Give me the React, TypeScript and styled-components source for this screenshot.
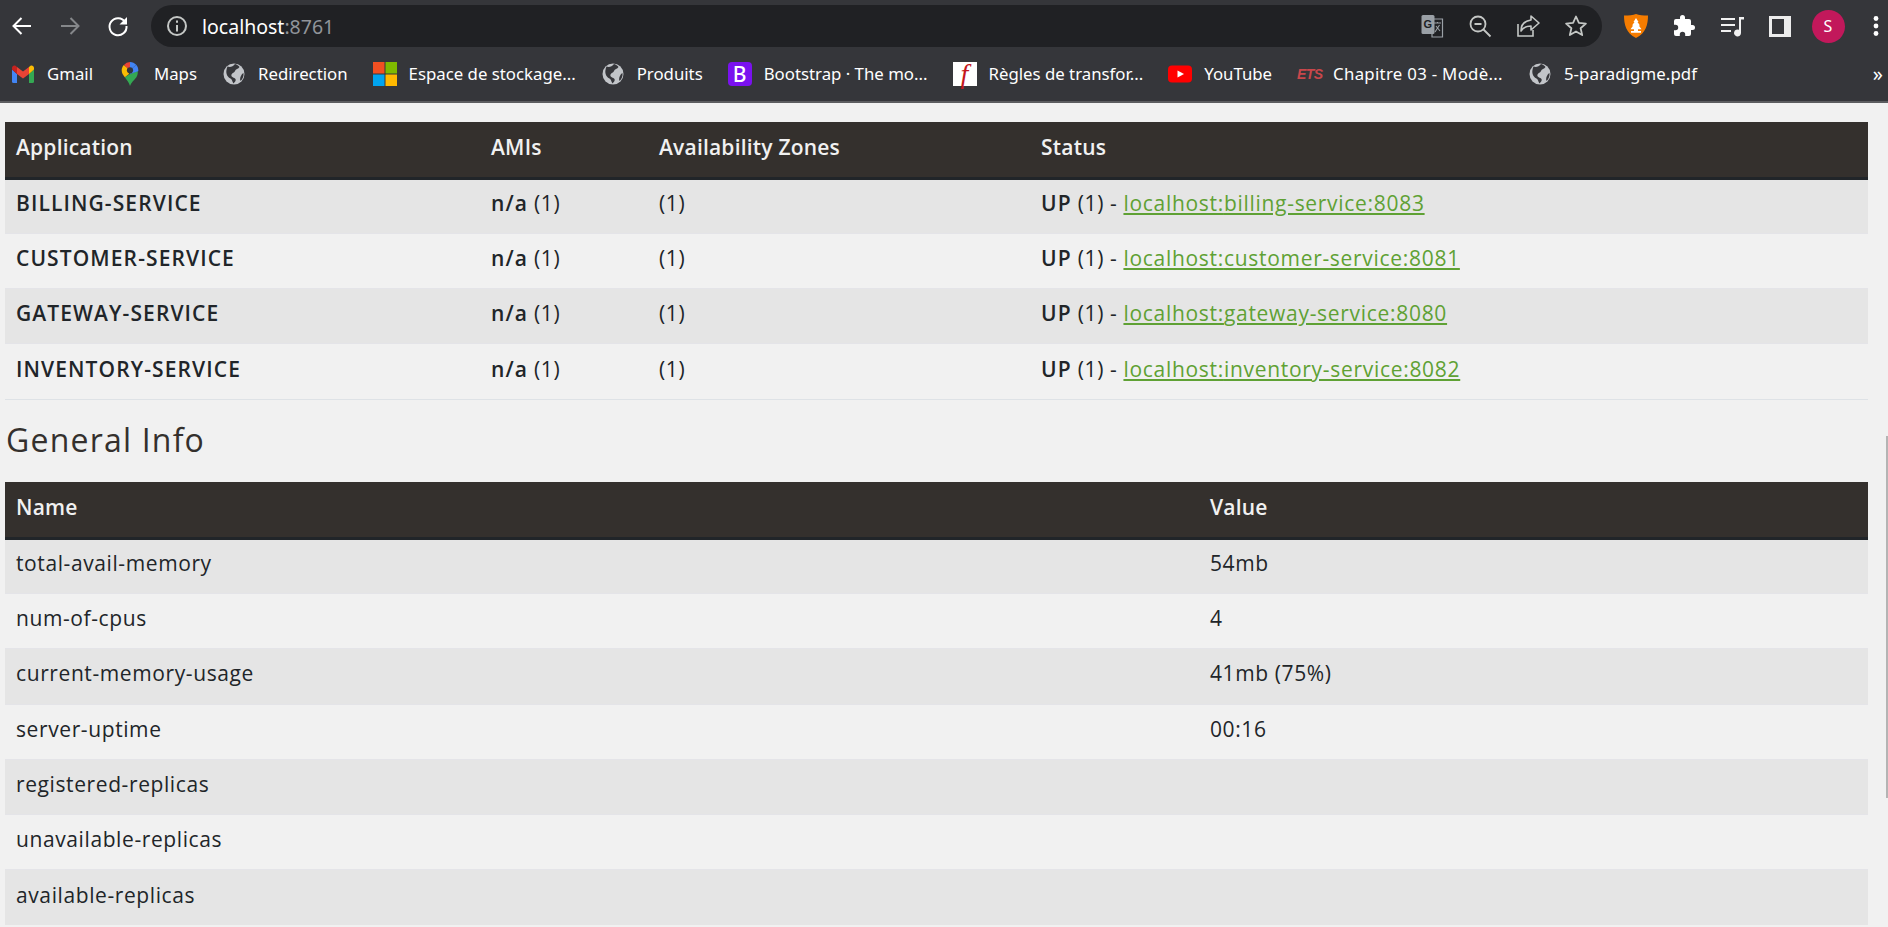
import React from "react";
import styled, { createGlobalStyle } from "styled-components";

const Global = createGlobalStyle`
  html, body { margin: 0; padding: 0; height: 100%; overflow: hidden; background: #f1f1f1; }
  #root { height: 100%; }
`;

const Page = styled.div`
  width: 1888px;
  height: 927px;
  overflow: hidden;
  position: relative;
  display: flex;
  flex-direction: column;
  font-family: "Open Sans", "Liberation Sans", sans-serif;
`;

const Chrome = styled.header`
  flex: none;
  height: 101px;
  background: #35363a;
  border-bottom: 2px solid #5c5d60;
  font-family: "Noto Sans", "Liberation Sans", sans-serif;
`;

const Toolbar = styled.div`
  height: 52px;
  display: flex;
  align-items: center;
`;

const NavGroup = styled.div`
  display: flex;
  margin-left: -2px;
  margin-right: 9px;
`;

const IconBtn = styled.div`
  width: 48px;
  height: 42px;
  flex: none;
  display: flex;
  align-items: center;
  justify-content: center;
`;

const Omnibox = styled.div`
  flex: none;
  width: 1451px;
  height: 42px;
  background: #202124;
  border-radius: 21px;
  display: flex;
  align-items: center;
  padding-left: 15px;
  box-sizing: border-box;
`;

const Url = styled.div`
  margin-left: 14px;
  font-size: 19.5px;
  color: #fff;
  flex: 1;
`;

const Port = styled.span`
  color: #90949a;
`;

const OmniActions = styled.div`
  display: flex;
  margin-right: 2px;
`;

const ExtGroup = styled.div`
  display: flex;
  margin-left: 10px;
`;

const Avatar = styled.div`
  width: 33px;
  height: 33px;
  border-radius: 50%;
  background: #c2185b;
  color: #fff;
  font-size: 16px;
  display: flex;
  align-items: center;
  justify-content: center;
`;

const Bookmarks = styled.div`
  height: 43px;
  display: flex;
  align-items: center;
  gap: 25px;
  padding-left: 11px;
  position: relative;
`;

const Bookmark = styled.div`
  display: flex;
  align-items: center;
  gap: 12px;
  color: #fff;
  font-size: 16.8px;
  white-space: nowrap;
`;

const BookmarkText = styled.span<{ $ls?: number }>`
  letter-spacing: ${(p) => p.$ls ?? 0}px;
`;

const More = styled.div`
  position: absolute;
  right: 5px;
  top: 8px;
  color: #fff;
  font-size: 20px;
`;

const Content = styled.main`
  flex: 1;
  padding: 19px 20px 0 5px;
  background: #f1f1f1;
`;

const Table = styled.table`
  width: 100%;
  border-collapse: collapse;
  table-layout: fixed;
`;

const Th = styled.th<{ $w?: number }>`
  ${(p) => (p.$w ? `width: ${p.$w}px;` : "")}
  background: #34302d;
  color: #f1f1f1;
  height: 56px;
  padding: 0 11px 4px;
  box-sizing: border-box;
  border-bottom: 3px solid #212529;
  text-align: left;
  font-size: 21px;
  font-weight: 600;
  letter-spacing: 0.2px;
`;

const Tr = styled.tr`
  &:nth-child(odd) td { background: #e5e5e5; }
`;

const Td = styled.td`
  height: 55.3px;
  padding: 0 11px 6px;
  box-sizing: border-box;
  border-top: 1px solid #e4e4e8;
  color: #212529;
  font-size: 21px;
  letter-spacing: 0.6px;
`;

const Strong = styled.b`
  font-weight: 600;
  color: #212529;
  letter-spacing: 1.1px;
`;

const Link = styled.a`
  color: #5fa134;
  text-decoration: underline;
  letter-spacing: 0.7px;
`;

const Heading = styled.h2`
  margin: 0;
  height: 83px;
  padding: 20px 0 0 1px;
  box-sizing: border-box;
  border-top: 1px solid #dee2e6;
  font-size: 32px;
  font-weight: 400;
  letter-spacing: 1.2px;
  color: #34302d;
  line-height: 40px;
`;

const Thumb = styled.div`
  position: absolute;
  right: 0;
  top: 436px;
  width: 2px;
  height: 362px;
  background: #b4b4b4;
`;

const Ico = styled.svg`
  display: block;
  flex: none;
`;

const Fav = styled.div<{ $bg: string }>`
  width: 24px;
  height: 24px;
  background: ${(p) => p.$bg};
  flex: none;
  display: flex;
  align-items: center;
  justify-content: center;
`;

const BootLogo = styled(Fav)`
  border-radius: 4px;
  color: #fff;
  font-weight: 500;
  font-size: 21px;
  font-family: "Noto Sans", sans-serif;
`;

const FLogo = styled(Fav)`
  color: #c4161c;
  font-style: italic;
  font-size: 28px;
  font-family: "Liberation Serif", serif;
`;

const EtsLogo = styled.div`
  width: 24px;
  color: #c8474b;
  font-style: italic;
  font-weight: 700;
  font-size: 14px;
  letter-spacing: -0.6px;
  font-family: "Liberation Sans", sans-serif;
`;

const Stroke = { fill: "none", stroke: "currentColor", strokeWidth: 2 } as const;

const Arrow = ({ dir, color }: { dir: "l" | "r"; color: string }) => (
  <Ico width="24" height="24" viewBox="0 0 24 24" style={{ color }} {...Stroke}>
    {dir === "l" ? <path d="M21 12H3.500M11.500 4l-8 8 8 8" /> : <path d="M3 12h17.500M12.500 4l8 8-8 8" />}
  </Ico>
);

const Reload = () => (
  <Ico width="24" height="24" viewBox="0 0 24 24">
    <path d="M19.200 8.200A8.500 8.500 0 1 0 20.500 12" fill="none" stroke="#fff" strokeWidth="2" />
    <path d="M21 3v7.500h-7.500z" fill="#fff" />
  </Ico>
);

const InfoIcon = () => (
  <Ico width="22" height="22" viewBox="0 0 22 22" fill="none" stroke="#c4c7c5">
    <circle cx="11" cy="11" r="9" strokeWidth="2" />
    <path d="M11 10v6.500M11 5.500v2.300" strokeWidth="2" />
  </Ico>
);

const Translate = () => (
  <Ico width="24" height="24" viewBox="0 0 24 24">
    <rect x="1.500" y="1" width="13" height="19" rx="1.500" fill="#9aa0a6" />
    <path d="M12 5h10.500v18H12z" fill="none" stroke="#9aa0a6" strokeWidth="1.200" />
    <text x="3.500" y="14" fontSize="11" fontWeight="700" fill="#202124" fontFamily="Liberation Sans">G</text>
    <path d="M14 9h7M17.500 8v1.500M15 18l4.500-7M16 12l4 5" stroke="#9aa0a6" strokeWidth="1.100" fill="none" />
  </Ico>
);

const ZoomOutIcon = () => (
  <Ico width="24" height="24" viewBox="0 0 24 24" fill="none" stroke="#c4c7c5" strokeWidth="1.800">
    <circle cx="10" cy="10" r="7.500" />
    <path d="M15.500 15.500l7 7M6.500 10h7" />
  </Ico>
);

const ShareIcon = () => (
  <Ico width="24" height="24" viewBox="0 0 24 24" fill="none" stroke="#c4c7c5" strokeWidth="1.600">
    <path d="M2 10v12h15v-6" />
    <path d="M15 2l8 7-8 7v-4c-5 0-8 1.500-10 5 0-6 3-10 10-11z" strokeLinejoin="round" />
  </Ico>
);

const StarIcon = () => (
  <Ico width="24" height="24" viewBox="0 0 24 24" fill="none" stroke="#c4c7c5" strokeWidth="1.800">
    <path d="M12 2.500l2.900 6.400 7 .7-5.300 4.600 1.600 6.900-6.200-3.700-6.200 3.700 1.600-6.900L2.100 9.600l7-.7z" strokeLinejoin="round" />
  </Ico>
);

const ShieldIcon = () => (
  <Ico width="24" height="24" viewBox="0 0 24 24">
    <path d="M12 0c3 1 7 1.500 12 1.500 0 9-2 17.500-12 22.500C2 19 0 10.500 0 1.500 5 1.500 9 1 12 0z" fill="#f57c00" />
    <path d="M12 4l2.500 4h-1l2.500 3.500h-1.200l2.700 3.700h-3.500V17h3v1.800H7V17h3v-1.800H6.500l2.700-3.700H8L10.500 8h-1z" fill="#fff" />
  </Ico>
);

const PuzzleIcon = () => (
  <Ico width="24" height="24" viewBox="0 0 24 24">
    <path d="M20.500 11H19V7a2 2 0 0 0-2-2h-4V3.500a2.500 2.500 0 0 0-5 0V5H4a2 2 0 0 0-2 2v3.800h1.500a2.700 2.700 0 0 1 0 5.400H2V20a2 2 0 0 0 2 2h3.800v-1.500a2.700 2.700 0 0 1 5.400 0V22H17a2 2 0 0 0 2-2v-4h1.500a2.500 2.500 0 0 0 0-5z" fill="#fff" />
  </Ico>
);

const QueueIcon = () => (
  <Ico width="24" height="24" viewBox="0 0 24 24" fill="#f1f1f1">
    <path d="M1 4h14v2H1zM1 10h14v2H1zM1 16h10v2H1z" />
    <path d="M19 3h5v2.500h-3V19a3.500 3.500 0 1 1-2-3.200z" />
  </Ico>
);

const PanelIcon = () => (
  <Ico width="22" height="21" viewBox="0 0 22 21">
    <rect x="1.500" y="1.500" width="19" height="18" fill="none" stroke="#ececec" strokeWidth="3" />
    <rect x="15" y="1" width="6" height="19" fill="#ececec" />
  </Ico>
);

const Kebab = () => (
  <Ico width="24" height="24" viewBox="0 0 24 24" fill="#fff">
    <circle cx="12" cy="4.500" r="2.400" />
    <circle cx="12" cy="12" r="2.400" />
    <circle cx="12" cy="19.500" r="2.400" />
  </Ico>
);

const Gmail = () => (
  <Ico width="24" height="24" viewBox="0 0 24 24">
    <path d="M1 7.500v12A1.500 1.500 0 0 0 2.500 21H6v-9z" fill="#4285f4" />
    <path d="M18 12v9h3.500a1.500 1.500 0 0 0 1.500-1.500v-12z" fill="#34a853" />
    <path d="M1 6c0-2 2.300-3.100 3.800-1.900L6 5v7L1 7.500z" fill="#c5221f" />
    <path d="M6 5l6 4.500L18 5v7l-6 4.500L6 12z" fill="#ea4335" />
    <path d="M18 5l1.200-.9C20.700 2.900 23 4 23 6v1.500L18 12z" fill="#fbbc04" />
  </Ico>
);

const MapsPin = () => (
  <Ico width="24" height="24" viewBox="0 0 24 24">
    <path d="M12 24c-.8-3.300-3-5.800-5.200-8.800L12 12l7.700-3c.3 2.300-.2 4.300-1.300 6.200-2.300 3-5.500 5.500-6.400 8.800z" fill="#34a853" />
    <path d="M6.800 15.200C5 13 3.700 11.200 3.700 8.300c0-2.100.8-3.900 2.200-5.300L12 8.300 11 12z" fill="#fbbc04" />
    <path d="M5.900 3A8.300 8.300 0 0 1 12 0v8.300z" fill="#ea4335" />
    <path d="M12 0c2.500 0 4.700 1.100 6.200 2.800L12 8.300z" fill="#4285f4" />
    <path d="M18.200 2.800c1.300 1.400 2.100 3.400 2.100 5.500 0 .3 0 .7-.1.900L12 12V8.300z" fill="#4285f4" />
    <circle cx="12" cy="8.300" r="3.100" fill="#35363a" />
  </Ico>
);

const Globe = () => (
  <Ico width="24" height="24" viewBox="0 0 24 24">
    <circle cx="12" cy="12" r="10.500" fill="#c2c5c9" />
    <path d="M5.500 4.500c2 1 5.500.5 7.500-2.500 2 .5 3.500 1.500 4.500 3-1 2-4 2-4.500 4-.3 1.500-3 2-3.500 3.500-1 3 3 3 4 4.500.8 1.300-.5 3-2 4.500-1.500-2-1-4-3-5-2-1-3.500-2.500-4-5-.5-2 0-4.500 1-7zM21.500 11c.5 3-1 6.500-3 8-1-2 0-4.500 1-6 .6-1 1-1.500 2-2z" fill="#35363a" />
  </Ico>
);

const MsLogo = () => (
  <Ico width="24" height="24" viewBox="0 0 24 24">
    <rect width="11.500" height="11.500" fill="#f25022" />
    <rect x="12.500" width="11.500" height="11.500" fill="#7fba00" />
    <rect y="12.500" width="11.500" height="11.500" fill="#00a4ef" />
    <rect x="12.500" y="12.500" width="11.500" height="11.500" fill="#ffb900" />
  </Ico>
);

const YtLogo = () => (
  <Ico width="24" height="24" viewBox="0 0 24 24">
    <rect y="3.500" width="24" height="17" rx="4" fill="#ff0000" />
    <path d="M9.500 8.500l6.500 3.500-6.500 3.500z" fill="#fff" />
  </Ico>
);

const marks: [React.ReactNode, string, number?][] = [
  [<Gmail />, "Gmail"],
  [<MapsPin />, "Maps"],
  [<Globe />, "Redirection"],
  [<MsLogo />, "Espace de stockage..."],
  [<Globe />, "Produits"],
  [<BootLogo $bg="#7a11ef">B</BootLogo>, "Bootstrap · The mo..."],
  [<FLogo $bg="#fff">f</FLogo>, "Règles de transfor..."],
  [<YtLogo />, "YouTube"],
  [<EtsLogo>ETS</EtsLogo>, "Chapitre 03 - Modè...", 0.3],
  [<Globe />, "5-paradigme.pdf", 0.1],
];

const services: [string, string][] = [
  ["BILLING-SERVICE", "billing-service:8083"],
  ["CUSTOMER-SERVICE", "customer-service:8081"],
  ["GATEWAY-SERVICE", "gateway-service:8080"],
  ["INVENTORY-SERVICE", "inventory-service:8082"],
];

const info: [string, string][] = [
  ["total-avail-memory", "54mb"],
  ["num-of-cpus", "4"],
  ["current-memory-usage", "41mb (75%)"],
  ["server-uptime", "00:16"],
  ["registered-replicas", ""],
  ["unavailable-replicas", ""],
  ["available-replicas", ""],
];

export default function App() {
  return (
    <Page>
      <Global />
      <Chrome>
        <Toolbar>
          <NavGroup>
            <IconBtn><Arrow dir="l" color="#fff" /></IconBtn>
            <IconBtn><Arrow dir="r" color="#85878a" /></IconBtn>
            <IconBtn><Reload /></IconBtn>
          </NavGroup>
          <Omnibox>
            <InfoIcon />
            <Url>localhost<Port>:8761</Port></Url>
            <OmniActions>
              <IconBtn><Translate /></IconBtn>
              <IconBtn><ZoomOutIcon /></IconBtn>
              <IconBtn><ShareIcon /></IconBtn>
              <IconBtn><StarIcon /></IconBtn>
            </OmniActions>
          </Omnibox>
          <ExtGroup>
            <IconBtn><ShieldIcon /></IconBtn>
            <IconBtn><PuzzleIcon /></IconBtn>
            <IconBtn><QueueIcon /></IconBtn>
            <IconBtn><PanelIcon /></IconBtn>
            <IconBtn><Avatar>S</Avatar></IconBtn>
            <IconBtn><Kebab /></IconBtn>
          </ExtGroup>
        </Toolbar>
        <Bookmarks>
          {marks.map(([icon, label, ls], i) => (
            <Bookmark key={i}>{icon}<BookmarkText $ls={ls}>{label}</BookmarkText></Bookmark>
          ))}
          <More>»</More>
        </Bookmarks>
      </Chrome>
      <Content>
        <Table>
          <thead>
            <tr>
              <Th $w={475}>Application</Th>
              <Th $w={168}>AMIs</Th>
              <Th $w={382}>Availability Zones</Th>
              <Th>Status</Th>
            </tr>
          </thead>
          <tbody>
            {services.map(([name, host]) => (
              <Tr key={name}>
                <Td><Strong>{name}</Strong></Td>
                <Td><Strong>n/a</Strong> (1)</Td>
                <Td>(1)</Td>
                <Td><Strong>UP</Strong> (1) - <Link href="#">localhost:{host}</Link></Td>
              </Tr>
            ))}
          </tbody>
        </Table>
        <Heading>General Info</Heading>
        <Table>
          <thead>
            <tr>
              <Th $w={1194}>Name</Th>
              <Th>Value</Th>
            </tr>
          </thead>
          <tbody>
            {info.map(([k, v]) => (
              <Tr key={k}>
                <Td>{k}</Td>
                <Td>{v}</Td>
              </Tr>
            ))}
          </tbody>
        </Table>
      </Content>
      <Thumb />
    </Page>
  );
}
